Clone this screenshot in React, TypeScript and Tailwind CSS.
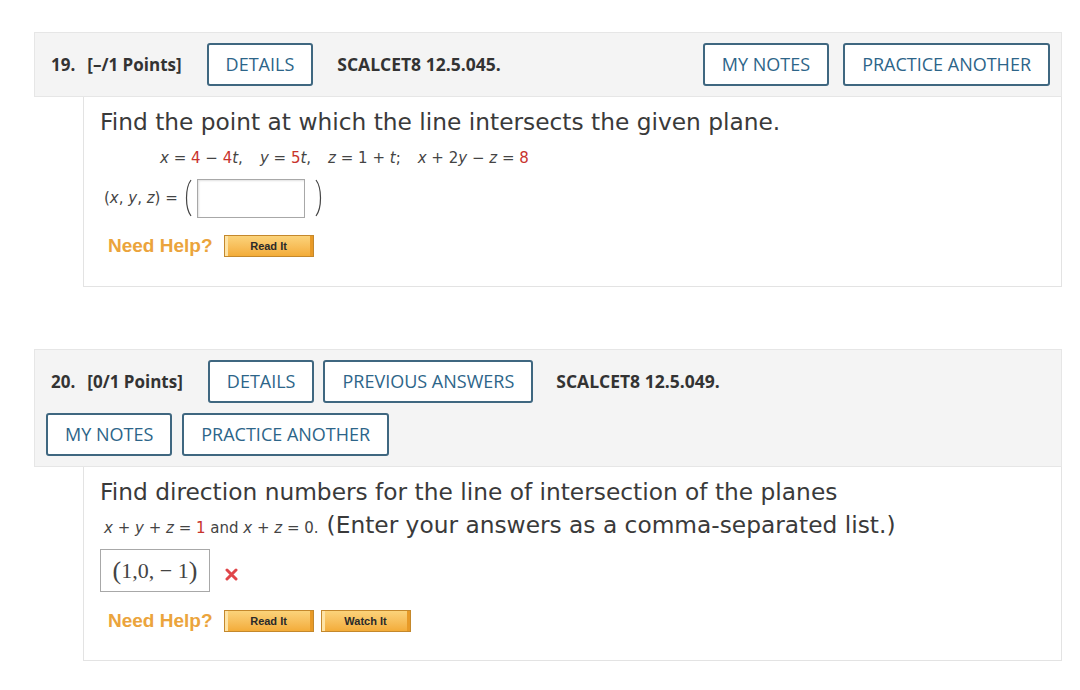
import React from 'react';

const headFont = { fontFamily: '"Open Sans", "Liberation Sans", sans-serif' };
const bodyFont = { fontFamily: '"DejaVu Sans", Verdana, sans-serif' };
const helpFont = { fontFamily: '"Liberation Sans", Arial, sans-serif' };

function NavButton({ label, className = '' }: { label: string; className?: string }) {
  return (
    <button
      className={`h-[43px] px-[17px] rounded-[3px] border-2 border-[#3f6780] bg-white text-[18px] font-medium text-[#2d6589] whitespace-nowrap ${className}`}
      style={headFont}
    >
      {label}
    </button>
  );
}

function HelpButton({ label }: { label: string }) {
  return (
    <button
      className="h-[22px] w-[90px] border border-[#c4882c] bg-gradient-to-b from-[#fbd37a] to-[#f3ac38] text-[11px] font-bold text-[#2a2a2a] shadow-[inset_3px_0_0_#fde3a6,inset_-3px_0_0_#e89a27]"
      style={helpFont}
    >
      {label}
    </button>
  );
}

function NeedHelp({ buttons }: { buttons: string[] }) {
  return (
    <div className="flex items-center gap-[7px] pl-[8px] h-[22px]">
      <span className="text-[19px] font-bold text-[#eba43c] mr-[4px]" style={helpFont}>
        Need Help?
      </span>
      {buttons.map((b) => (
        <HelpButton key={b} label={b} />
      ))}
    </div>
  );
}

function Paren({ flip = false }: { flip?: boolean }) {
  return (
    <svg width="10" height="40" viewBox="0 0 10 40" className={flip ? '-scale-x-100' : ''}>
      <path d="M8 2 C2 10 2 30 8 38" fill="none" stroke="#444" strokeWidth="1.2" />
    </svg>
  );
}

const R = ({ children }: { children: React.ReactNode }) => (
  <span className="text-[#c8332c] not-italic">{children}</span>
);

export default function App() {
  return (
    <div className="min-h-screen bg-white pt-[32px] text-[#333]">
      {/* Question 19 */}
      <div className="ml-[34px] w-[1028px]">
        <div className="flex items-center bg-[#f4f4f4] border border-[#e6e6e6] px-[11px] py-[10px]" style={headFont}>
          <span className="ml-[5px] text-[17px] font-bold text-[#333]">19.</span>
          <span className="ml-[12px] text-[17px] font-bold text-[#333]">[–/1 Points]</span>
          <NavButton label="DETAILS" className="ml-[25px]" />
          <span className="ml-[24px] text-[17.5px] font-bold text-[#333]">SCALCET8 12.5.045.</span>
          <div className="ml-auto flex gap-[14px]">
            <NavButton label="MY NOTES" />
            <NavButton label="PRACTICE ANOTHER" />
          </div>
        </div>
        <div className="ml-[49px] h-[190px] border-x border-b border-[#e3e3e3] pl-[16px] pt-[10px]" style={bodyFont}>
          <p className="text-[23.3px] leading-[30px] text-[#3a3a3a]">Find the point at which the line intersects the given plane.</p>
          <p className="mt-[11px] ml-[60px] flex gap-[17px] text-[15px] leading-[20px] text-[#444] whitespace-pre">
            <span><i>x</i> = <R>4</R> − <R>4</R><i>t</i>,</span>
            <span><i>y</i> = <R>5</R><i>t</i>,</span>
            <span><i>z</i> = 1 + <i>t</i>;</span>
            <span><i>x</i> + 2<i>y</i> − <i>z</i> = <R>8</R></span>
          </p>
          <div className="mt-[10px] ml-[4px] flex items-center h-[40px]">
            <span className="text-[15px] text-[#444]">
              (<i>x</i>, <i>y</i>, <i>z</i>) =
            </span>
            <span className="ml-[5px]"><Paren /></span>
            <div className="ml-[4px] h-[39px] w-[108px] border border-[#a8a8a8] shadow-[inset_1px_1px_2px_rgba(0,0,0,0.12)] bg-white" />
            <span className="ml-[9px]"><Paren flip /></span>
          </div>
          <div className="mt-[17px]">
            <NeedHelp buttons={['Read It']} />
          </div>
        </div>
      </div>

      {/* Question 20 */}
      <div className="ml-[34px] mt-[62px] w-[1028px]">
        <div className="flex flex-wrap items-center gap-y-[10px] bg-[#f4f4f4] border border-[#e6e6e6] px-[11px] py-[10px]" style={headFont}>
          <span className="ml-[5px] text-[17px] font-bold text-[#333]">20.</span>
          <span className="ml-[12px] text-[17px] font-bold text-[#333]">[0/1 Points]</span>
          <NavButton label="DETAILS" className="ml-[25px]" />
          <NavButton label="PREVIOUS ANSWERS" className="ml-[9px]" />
          <span className="ml-[23px] text-[17.5px] font-bold text-[#333]">SCALCET8 12.5.049.</span>
          <div className="basis-full flex gap-[10px]">
            <NavButton label="MY NOTES" />
            <NavButton label="PRACTICE ANOTHER" />
          </div>
        </div>
        <div className="ml-[49px] h-[194px] border-x border-b border-[#e3e3e3] pl-[16px] pt-[10px]" style={bodyFont}>
          <p className="text-[23.3px] leading-[30px] text-[#3a3a3a]">Find direction numbers for the line of intersection of the planes</p>
          <p className="mt-[3px] ml-[4px] flex items-baseline leading-[30px] text-[#444]">
            <span className="text-[15px] whitespace-pre">
              <i>x</i> + <i>y</i> + <i>z</i> = <R>1</R> and <i>x</i> + <i>z</i> = 0.
            </span>
            <span className="ml-[8px] text-[23.3px] text-[#3a3a3a]">(Enter your answers as a comma-separated list.)</span>
          </p>
          <div className="mt-[6px] flex items-center">
            <div
              className="h-[43px] w-[110px] border border-[#a8a8a8] flex items-center justify-center text-[22px] text-[#444]"
              style={{ fontFamily: '"Liberation Serif", "Times New Roman", serif' }}
            >
              <span className="text-[26px] leading-none">(</span>1,0, − 1<span className="text-[26px] leading-none">)</span>
            </div>
            <svg width="13" height="13" viewBox="0 0 13 13" className="ml-[15px] mt-[8px]">
              <path d="M2 2 L11 11 M11 2 L2 11" stroke="#e0464a" strokeWidth="3" strokeLinecap="round" />
            </svg>
          </div>
          <div className="mt-[18px]">
            <NeedHelp buttons={['Read It', 'Watch It']} />
          </div>
        </div>
      </div>
    </div>
  );
}
